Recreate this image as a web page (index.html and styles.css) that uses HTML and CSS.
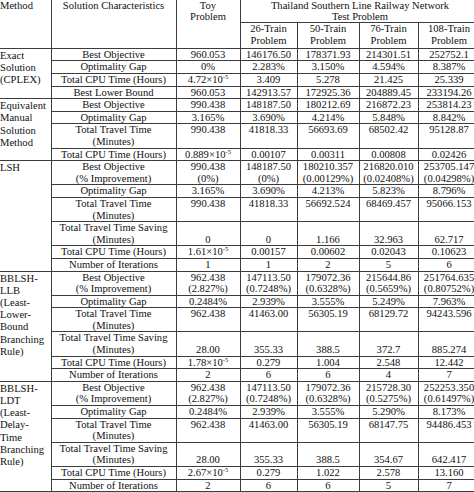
FILE: index.html
```html
<!DOCTYPE html>
<html>
<head>
<meta charset="utf-8">
<link rel="stylesheet" href="styles.css">
</head>
<body>
<table class="tbl">
  <colgroup>
    <col class="c-method"><col class="c-char"><col class="c-toy"><col class="c-26"><col class="c-50"><col class="c-76"><col class="c-108">
  </colgroup>
  <thead>
    <tr class="h1">
      <th rowspan="2" class="method">Method</th>
      <th rowspan="2">Solution Characteristics</th>
      <th rowspan="2">Toy<br>Problem</th>
      <th colspan="4">Thailand Southern Line Railway Network<br>Test Problem</th>
    </tr>
    <tr class="h2">
      <th>26-Train<br>Problem</th>
      <th>50-Train<br>Problem</th>
      <th>76-Train<br>Problem</th>
      <th>108-Train<br>Problem</th>
    </tr>
  </thead>
  <tbody>
    <tr>
      <td rowspan="4" class="method">Exact<br>Solution<br>(CPLEX)</td>
      <td>Best Objective</td><td>960.053</td><td>146176.50</td><td>178371.93</td><td>214301.51</td><td>252752.1</td>
    </tr>
    <tr><td>Optimality Gap</td><td>0%</td><td>2.283%</td><td>3.150%</td><td>4.594%</td><td>8.387%</td></tr>
    <tr><td>Total CPU Time (Hours)</td><td>4.72×10<sup>-5</sup></td><td>3.409</td><td>5.278</td><td>21.425</td><td>25.339</td></tr>
    <tr><td>Best Lower Bound</td><td>960.053</td><td>142913.57</td><td>172925.36</td><td>204889.45</td><td>233194.26</td></tr>

    <tr>
      <td rowspan="4" class="method">Equivalent<br>Manual<br>Solution<br>Method</td>
      <td>Best Objective</td><td>990.438</td><td>148187.50</td><td>180212.69</td><td>216872.23</td><td>253814.23</td>
    </tr>
    <tr><td>Optimality Gap</td><td>3.165%</td><td>3.690%</td><td>4.214%</td><td>5.848%</td><td>8.842%</td></tr>
    <tr><td>Total Travel Time<br>(Minutes)</td><td>990.438</td><td>41818.33</td><td>56693.69</td><td>68502.42</td><td>95128.87</td></tr>
    <tr><td>Total CPU Time (Hours)</td><td>0.889×10<sup>-5</sup></td><td>0.00107</td><td>0.00311</td><td>0.00808</td><td>0.02426</td></tr>

    <tr>
      <td rowspan="6" class="method">LSH</td>
      <td>Best Objective<br>(% Improvement)</td><td>990.438<br>(0%)</td><td>148187.50<br>(0%)</td><td>180210.357<br>(0.00129%)</td><td>216820.010<br>(0.02408%)</td><td>253705.147<br>(0.04298%)</td>
    </tr>
    <tr><td>Optimality Gap</td><td>3.165%</td><td>3.690%</td><td>4.213%</td><td>5.823%</td><td>8.796%</td></tr>
    <tr><td>Total Travel Time<br>(Minutes)</td><td>990.438</td><td>41818.33</td><td>56692.524</td><td>68469.457</td><td>95066.153</td></tr>
    <tr class="saving"><td>Total Travel Time Saving<br>(Minutes)</td><td>0</td><td>0</td><td>1.166</td><td>32.963</td><td>62.717</td></tr>
    <tr><td>Total CPU Time (Hours)</td><td>1.61×10<sup>-5</sup></td><td>0.00157</td><td>0.00602</td><td>0.02043</td><td>0.10623</td></tr>
    <tr><td>Number of Iterations</td><td>1</td><td>1</td><td>2</td><td>5</td><td>6</td></tr>

    <tr>
      <td rowspan="6" class="method">BBLSH-<br>LLB<br>(Least-<br>Lower-<br>Bound<br>Branching<br>Rule)</td>
      <td>Best Objective<br>(% Improvement)</td><td>962.438<br>(2.827%)</td><td>147113.50<br>(0.7248%)</td><td>179072.36<br>(0.6328%)</td><td>215644.86<br>(0.5659%)</td><td>251764.635<br>(0.80752%)</td>
    </tr>
    <tr><td>Optimality Gap</td><td>0.2484%</td><td>2.939%</td><td>3.555%</td><td>5.249%</td><td>7.963%</td></tr>
    <tr><td>Total Travel Time<br>(Minutes)</td><td>962.438</td><td>41463.00</td><td>56305.19</td><td>68129.72</td><td>94243.596</td></tr>
    <tr class="saving"><td>Total Travel Time Saving<br>(Minutes)</td><td>28.00</td><td>355.33</td><td>388.5</td><td>372.7</td><td>885.274</td></tr>
    <tr><td>Total CPU Time (Hours)</td><td>1.78×10<sup>-5</sup></td><td>0.279</td><td>1.004</td><td>2.548</td><td>12.442</td></tr>
    <tr><td>Number of Iterations</td><td>2</td><td>6</td><td>6</td><td>4</td><td>7</td></tr>

    <tr>
      <td rowspan="6" class="method">BBLSH-<br>LDT<br>(Least-<br>Delay-<br>Time<br>Branching<br>Rule)</td>
      <td>Best Objective<br>(% Improvement)</td><td>962.438<br>(2.827%)</td><td>147113.50<br>(0.7248%)</td><td>179072.36<br>(0.6328%)</td><td>215728.30<br>(0.5275%)</td><td>252253.350<br>(0.61497%)</td>
    </tr>
    <tr><td>Optimality Gap</td><td>0.2484%</td><td>2.939%</td><td>3.555%</td><td>5.290%</td><td>8.173%</td></tr>
    <tr><td>Total Travel Time<br>(Minutes)</td><td>962.438</td><td>41463.00</td><td>56305.19</td><td>68147.75</td><td>94486.453</td></tr>
    <tr class="saving"><td>Total Travel Time Saving<br>(Minutes)</td><td>28.00</td><td>355.33</td><td>388.5</td><td>354.67</td><td>642.417</td></tr>
    <tr><td>Total CPU Time (Hours)</td><td>2.67×10<sup>-5</sup></td><td>0.279</td><td>1.022</td><td>2.578</td><td>13.160</td></tr>
    <tr><td>Number of Iterations</td><td>2</td><td>6</td><td>6</td><td>5</td><td>7</td></tr>
  </tbody>
</table>
</body>
</html>
```
FILE: styles.css
```css
html, body {
  margin: 0;
  padding: 0;
  background: #fff;
  overflow: hidden;
}

.tbl {
  border-collapse: collapse;
  table-layout: fixed;
  width: 480px;
  font-family: "Liberation Serif", "Times New Roman", serif;
  font-size: 10.6px;
  color: #111;
}

.c-method { width: 51px; }
.c-char { width: 125px; }
.c-toy { width: 64px; }
.c-26 { width: 57px; }
.c-50 { width: 62px; }
.c-76 { width: 59px; }
.c-108 { width: 62px; }

.tbl th,
.tbl td {
  border: 1px solid #3c3c3c;
  padding: 0;
  text-align: center;
  vertical-align: top;
  line-height: 11.6px;
  white-space: nowrap;
  font-weight: normal;
}

.tbl thead tr.h1 th {
  border-top: none;
  line-height: 11px;
}

.tbl thead tr.h2 th {
  line-height: 12.4px;
}

.tbl .method {
  text-align: left;
  white-space: normal;
  border-left: none;
  line-height: 12.2px;
  padding-top: 1px;
}

.tbl thead .method {
  padding-top: 0;
  line-height: 11px;
}

.tbl tr.saving td {
  vertical-align: bottom;
}

.tbl tr.saving td:first-child {
  vertical-align: top;
}

.tbl sup {
  font-size: 6.5px;
  line-height: 0;
  vertical-align: 4px;
}
```
